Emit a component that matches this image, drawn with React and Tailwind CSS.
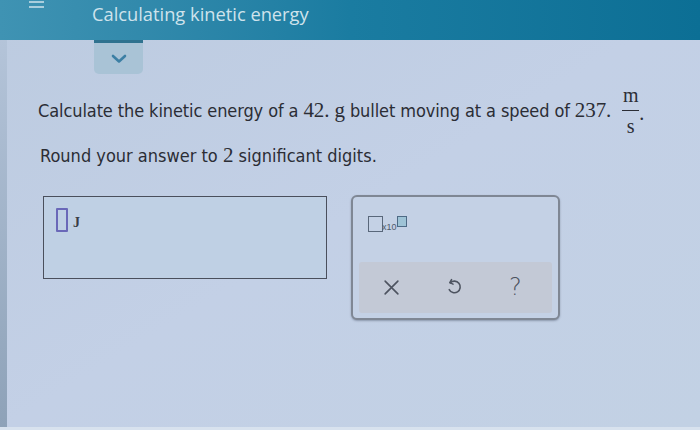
export default function App() {
  return (
    <div className="relative flex h-[430px] w-[700px] flex-col overflow-hidden bg-gradient-to-br from-[#bccbe0] via-[#c3d0e6] to-[#c2d1e4] font-['Liberation_Sans',sans-serif]">
      {/* header */}
      <div className="flex h-[40px] shrink-0 items-center bg-gradient-to-r from-[#3f93b3] via-[#1a7ca1] to-[#0c6f95]">
        <div className="ml-[29px] flex w-[15px] flex-col gap-[3px] self-start pt-[1px]">
          <span className="h-[2px] bg-[#a9cedd]" />
          <span className="h-[2px] bg-[#a9cedd]" />
        </div>
        <h1 className="ml-[48px] -mt-[12px] font-['Open_Sans',sans-serif] text-[18.3px] text-[#cfe3ec]">
          Calculating kinetic energy
        </h1>
      </div>

      <div className="flex flex-1">
        {/* left edge strip */}
        <div className="w-[7px] shrink-0 bg-gradient-to-b from-[#b4c4d9] to-[#8ea2b8]" />

        <div className="flex flex-1 flex-col">
          {/* collapse tab */}
          <div className="ml-[87px] flex h-[34px] w-[49px] items-center justify-center rounded-b-[5px] border-t-[3px] border-[#2f728f] bg-[#a9c3d6]">
            <svg width="16" height="10" viewBox="0 0 16 10" fill="none">
              <path d="M2 2l6 5.5L14 2" stroke="#3c7fa4" strokeWidth="2.6" strokeLinecap="round" strokeLinejoin="round" />
            </svg>
          </div>

          {/* question */}
          <div className="ml-[31px] mt-[11px] flex items-center font-['DejaVu_Sans_Condensed','DejaVu_Sans',sans-serif] text-[18px] text-[#2b2d35]">
            <span className="tracking-[-0.1px]">
              Calculate the kinetic energy of a <span className="font-['Liberation_Serif',serif] text-[21px]">42.</span>{" "}
              <span className="font-['Liberation_Serif',serif] text-[21px]">g</span> bullet moving at a speed of{" "}
              <span className="font-['Liberation_Serif',serif] text-[21px]">237.</span>
            </span>
            <span className="ml-[11px] flex flex-col items-center font-['Liberation_Serif',serif] text-[20px] leading-[20px]">
              <span>m</span>
              <span className="my-[5px] h-[1px] w-[17px] bg-[#2b2d35]" />
              <span>s</span>
            </span>
            <span className="mt-[4px] font-['Liberation_Serif',serif] text-[20px]">.</span>
          </div>

          <p className="ml-[33px] mt-[4px] font-['DejaVu_Sans_Condensed','DejaVu_Sans',sans-serif] text-[18px] text-[#2b2d35]">
            Round your answer to <span className="font-['Liberation_Serif',serif] text-[21px]">2</span> significant digits.
          </p>

          {/* answer area */}
          <div className="ml-[36px] mt-[23px] flex items-start gap-[24px]">
            <div className="mt-[1px] flex h-[83px] w-[284px] items-start border border-[#4a4f5c] bg-[#bfd0e4] px-[12px] pt-[11px]">
              <span className="h-[24px] w-[12px] rounded-[1px] border-2 border-[#6a68b8]" />
              <span className="ml-[5px] mt-[4px] font-['Liberation_Serif',serif] text-[14px] font-bold text-[#3a3d46]">J</span>
            </div>

            <div className="flex h-[125px] w-[209px] flex-col rounded-[6px] border-2 border-[#7f8794] bg-[#c4d1e5] px-[6px] pb-[5px] shadow-[0_1px_2px_rgba(60,70,90,0.4)]">
              <div className="ml-[9px] mt-[19px] flex items-end">
                <span className="h-[16px] w-[15px] border-[1.5px] border-[#59677a]" />
                <span className="-ml-[1px] text-[9px] leading-[9px] text-[#4f5b6c]">x10</span>
                <span className="h-[11px] w-[10px] self-start border-[1.5px] border-[#4e6a85] bg-[#9ec3d6]" />
              </div>
              <div className="mt-auto flex h-[51px] items-center rounded-[3px] bg-[#c3c9d6] pl-[24px]">
                <svg width="17" height="17" viewBox="0 0 16 16" fill="none">
                  <path d="M2 2l12 12M14 2L2 14" stroke="#4d5360" strokeWidth="1.5" strokeLinecap="round" />
                </svg>
                <svg className="ml-[47px]" width="15" height="19" viewBox="0 0 14 18" fill="none">
                  <path d="M4.2 1.5L2.6 4.4l3 1.4" stroke="#4d5360" strokeWidth="1.5" strokeLinecap="round" strokeLinejoin="round" />
                  <path d="M3 4.6A5.5 5.5 0 1 1 2 11" stroke="#4d5360" strokeWidth="1.5" strokeLinecap="round" />
                </svg>
                <span className="ml-[47px] font-['DejaVu_Sans',sans-serif] text-[24px] font-light leading-none text-[#4d5360]">?</span>
              </div>
            </div>
          </div>
        </div>
      </div>
      <div className="h-[3px] bg-[#d8e2ee]" />
    </div>
  );
}
